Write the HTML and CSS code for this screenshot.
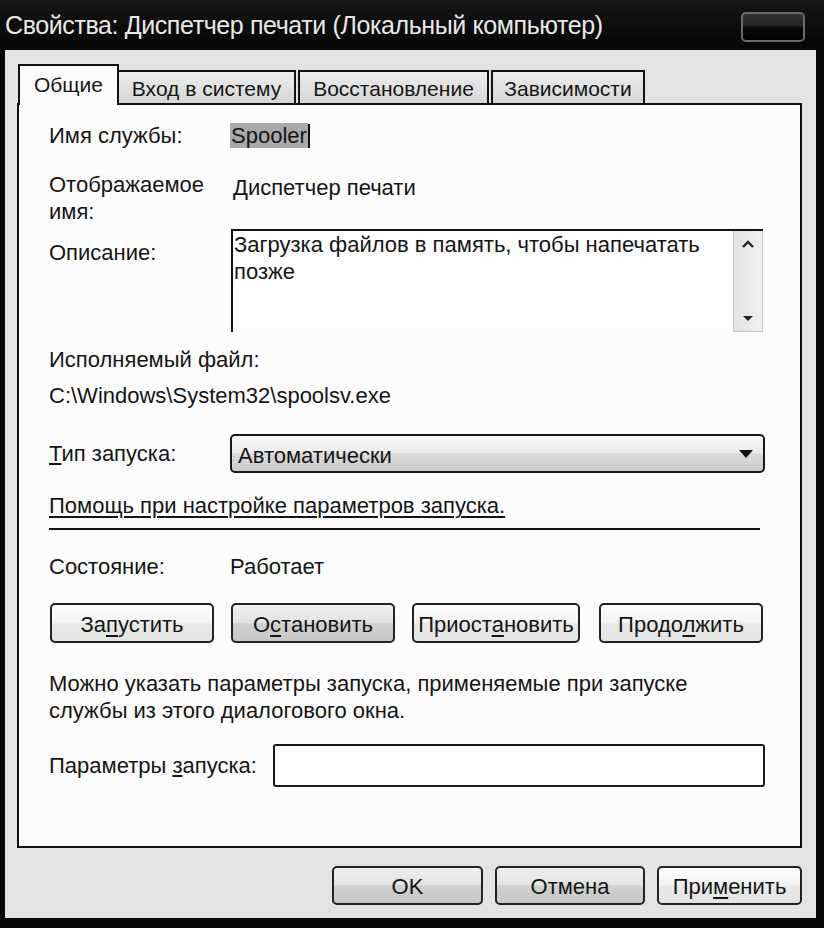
FILE: index.html
```html
<!DOCTYPE html>
<html lang="ru">
<head>
<meta charset="utf-8">
<title>Свойства: Диспетчер печати</title>
<link rel="stylesheet" href="styles.css">
</head>
<body>
<div class="window">
  <div class="titlebar">
    <span class="title">Свойства: Диспетчер печати (Локальный компьютер)</span>
    <span class="close"></span>
  </div>
  <div class="frame">
    <div class="tabs">
      <div class="tab tab-active">Общие</div>
      <div class="tab tab-login">Вход в систему</div>
      <div class="tab tab-recovery">Восстановление</div>
      <div class="tab tab-deps">Зависимости</div>
    </div>
    <div class="panel">
      <div class="row row-name">
        <span class="label">Имя службы:</span>
        <span class="value"><span class="selected">Spooler</span><span class="caret"></span></span>
      </div>
      <div class="row row-display">
        <span class="label">Отображаемое<br>имя:</span>
        <span class="value value-display">Диспетчер печати</span>
      </div>
      <div class="row row-desc">
        <span class="label label-desc">Описание:</span>
        <div class="textarea">
          <div class="textarea-text">Загрузка файлов в память, чтобы напечатать позже</div>
          <div class="scrollbar">
            <svg class="sb-arrow" width="14" height="10" viewBox="0 0 14 10"><path d="M2 8 L7 3 L12 8" fill="none" stroke="#222" stroke-width="2.4"/></svg>
            <svg class="sb-arrow" width="14" height="10" viewBox="0 0 14 10"><path d="M2 3 L12 3 L7 8 Z" fill="#222"/></svg>
          </div>
        </div>
      </div>
      <div class="line exe-label">Исполняемый файл:</div>
      <div class="line exe-path">C:\Windows\System32\spoolsv.exe</div>
      <div class="row row-startup">
        <span class="label"><u>Т</u>ип запуска:</span>
        <div class="select">
          <span class="select-text">Автоматически</span>
          <svg width="16" height="10" viewBox="0 0 16 10"><path d="M1 1 L15 1 L8 9 Z" fill="#111"/></svg>
        </div>
      </div>
      <div class="line help-link">Помощь при настройке параметров запуска.</div>
      <div class="separator"></div>
      <div class="row row-status">
        <span class="label">Состояние:</span>
        <span class="value">Работает</span>
      </div>
      <div class="service-buttons">
        <button class="btn btn-start">За<u>п</u>устить</button>
        <button class="btn btn-stop btn-dark">О<u>с</u>тановить</button>
        <button class="btn btn-pause">Приост<u>а</u>новить</button>
        <button class="btn btn-resume">Продо<u>л</u>жить</button>
      </div>
      <p class="note">Можно указать параметры запуска, применяемые при запуске службы из этого диалогового окна.</p>
      <div class="row row-params">
        <span class="label label-params">Параметры <u>з</u>апуска:</span>
        <div class="input"></div>
      </div>
    </div>
    <div class="footer">
      <button class="btn btn-ok btn-dark">OK</button>
      <button class="btn btn-cancel btn-dark">Отмена</button>
      <button class="btn btn-apply">При<u>м</u>енить</button>
    </div>
  </div>
</div>
</body>
</html>
```
FILE: styles.css
```css
* { box-sizing: border-box; }
html, body { margin: 0; padding: 0; }
body {
  background: #000;
  font-family: "Liberation Sans", Arial, sans-serif;
  font-size: 22px;
  line-height: 27px;
  color: #151515;
}
.window {
  width: 824px;
  height: 928px;
  display: flex;
  flex-direction: column;
  background: #060606;
}
.titlebar {
  height: 50px;
  display: flex;
  align-items: center;
  justify-content: space-between;
  padding: 0 19px 0 5px;
  background: linear-gradient(#161616, #050505);
  color: #e8e8e8;
  font-size: 25px;
}
.title { letter-spacing: -0.4px; }
.close {
  width: 64px;
  height: 30px;
  margin-top: 4px;
  border: 2px solid #6a6a6a;
  border-radius: 5px;
  background: linear-gradient(#333 0%, #222 45%, #0a0a0a 50%, #000 100%);
}
.frame {
  flex: 1;
  margin: 0 8px 10px 5px;
  background: #e3e3e3;
  padding: 14px 14px 0 12px;
  display: flex;
  flex-direction: column;
}
.tabs {
  display: flex;
  align-items: flex-end;
  height: 41px;
  padding-left: 1px;
  margin-bottom: -2px;
  position: relative;
  z-index: 1;
}
.tab {
  height: 33px;
  margin-bottom: 2px;
  border: 2px solid #121212;
  border-bottom: none;
  background: linear-gradient(#ececec, #d6d6d6);
  display: flex;
  align-items: center;
  justify-content: center;
  font-size: 21px;
  white-space: nowrap;
  padding-top: 2px;
}
.tab-active {
  height: 41px;
  margin-bottom: 0;
  background: #fcfcfc;
  width: 101px;
  padding-top: 0;
  padding-bottom: 3px;
}
.tab-login { width: 177px; border-left: none; }
.tab-recovery { width: 191px; margin-left: 2px; }
.tab-deps { width: 154px; margin-left: 2px; }
.panel {
  height: 745px;
  border: 2px solid #111;
  background: #fcfcfc;
  padding: 17px 35px 0 30px;
}
.row {
  display: grid;
  grid-template-columns: 181px 1fr;
  align-items: start;
}
.selected {
  background: #a9a9a9;
  padding: 0 1px;
}
.caret {
  display: inline-block;
  width: 2px;
  height: 24px;
  background: #111;
  vertical-align: -5px;
}
.row-display { margin-top: 22px; }
.value-display { padding-top: 3px; padding-left: 3px; }
.row-desc { margin-top: 4px; }
.label-desc { padding-top: 10px; }
.textarea {
  height: 103px;
  width: 532px;
  margin-left: 1px;
  border-top: 2px solid #111;
  border-left: 2px solid #111;
  display: flex;
  background: #fdfdfd;
}
.textarea-text {
  flex: 1;
  padding: 0 4px 0 1px;
}
.scrollbar {
  width: 30px;
  background: linear-gradient(90deg, #e2e2e2, #f0f0f0);
  border-left: 1px solid #c4c4c4;
  border-right: 1px solid #c4c4c4;
  border-bottom: 1px solid #c4c4c4;
  display: flex;
  flex-direction: column;
  justify-content: space-between;
  align-items: center;
  padding: 8px 0 8px;
}
.exe-label { margin-top: 14px; }
.exe-path { margin-top: 9px; }
.row-startup { margin-top: 25px; align-items: center; }
.select {
  height: 39px;
  width: 535px;
  border: 2px solid #1a1a1a;
  border-radius: 5px;
  background: linear-gradient(#f6f6f6 0%, #ececec 48%, #d9d9d9 52%, #cdcdcd 100%);
  display: flex;
  align-items: center;
  justify-content: space-between;
  padding: 0 9px 0 6px;
}
.select-text { padding-top: 4px; }
.help-link {
  margin-top: 19px;
  text-decoration: underline;
  text-underline-offset: 3px;
  text-decoration-thickness: 2px;
}
.separator {
  margin-top: 9px;
  height: 2px;
  margin-right: 5px;
  background: #111;
}
.row-status { margin-top: 23px; }
.service-buttons {
  margin-top: 23px;
  padding-left: 1px;
  display: flex;
  gap: 17px;
}
.btn {
  height: 40px;
  width: 164px;
  padding: 4px 0 0;
  border: 2px solid #222;
  border-radius: 5px;
  font-family: inherit;
  font-size: 22px;
  color: #151515;
  background: linear-gradient(#fdfdfd 0%, #f3f3f3 48%, #e8e8e8 52%, #e4e4e4 100%);
  line-height: 1;
}
.btn-dark {
  background: linear-gradient(#f0f0f0 0%, #e3e3e3 48%, #cfcfcf 52%, #c8c8c8 100%);
}
.btn u { text-underline-offset: 3px; }
.btn-pause { width: 168px; }
.btn-resume { margin-left: 2px; }
.note {
  margin: 27px 0 0;
  padding-right: 60px;
}
.row-params {
  margin-top: 20px;
  grid-template-columns: 224px 1fr;
  align-items: center;
}
.input {
  height: 43px;
  width: 492px;
  border: 2px solid #1a1a1a;
  border-radius: 3px;
  background: #fdfdfd;
}
.footer {
  margin-top: 18px;
  display: flex;
  justify-content: flex-end;
  gap: 12px;
}
.footer .btn { height: 39px; padding-top: 2px; }
.btn-ok { width: 151px; }
.btn-cancel { width: 150px; }
.btn-apply { width: 145px; }
```
